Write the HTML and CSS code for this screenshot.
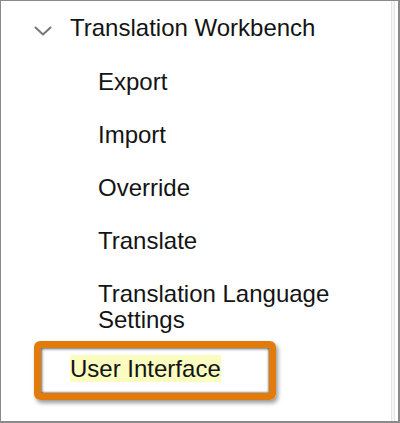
FILE: index.html
```html
<!DOCTYPE html>
<html lang="en">
<head>
<meta charset="utf-8">
<title>Translation Workbench</title>
<link rel="stylesheet" href="styles.css">
</head>
<body>
<div class="frame">
  <nav class="content">
    <div class="heading">
      <svg class="chevron" width="18" height="10" viewBox="0 0 18 10" aria-hidden="true">
        <path d="M1.5 1.5 L9 8.5 L16.5 1.5" fill="none" stroke="#777" stroke-width="2" stroke-linecap="round" stroke-linejoin="round"/>
      </svg>
      <span class="heading-text">Translation Workbench</span>
    </div>
    <ul class="items">
      <li class="item">Export</li>
      <li class="item">Import</li>
      <li class="item">Override</li>
      <li class="item">Translate</li>
      <li class="item">Translation Language<br>Settings</li>
      <li class="item marked"><span class="hl">User Interface</span></li>
    </ul>
  </nav>
  <div class="track"></div>
</div>
</body>
</html>
```

FILE: styles.css
```css
html, body {
  margin: 0;
  padding: 0;
  background: #ffffff;
}

.frame {
  width: 400px;
  height: 423px;
  box-sizing: border-box;
  border: 1px solid #8a8a8a;
  border-right: 2px solid #8a8a8a;
  border-bottom-width: 2px;
  display: flex;
  font-family: "Liberation Sans", Arial, sans-serif;
  font-size: 24px;
  line-height: 26px;
  color: #141414;
  overflow: hidden;
}

.content {
  width: 390px;
  padding-top: 14px;
}

.heading {
  display: flex;
  align-items: center;
  height: 26px;
}

.chevron {
  margin-left: 33px;
  margin-top: 6px;
  margin-right: 18px;
  flex: none;
}

.heading-text {
  white-space: nowrap;
}

.items {
  list-style: none;
  margin: 28px 0 0 0;
  padding: 0 0 0 97px;
  display: flex;
  flex-direction: column;
  gap: 27px;
}

.item {
  white-space: nowrap;
}

.item.marked {
  margin-left: -64px;
  margin-top: -19px;
  width: 242px;
  box-sizing: border-box;
  border: 7px solid #e07b0c;
  border-radius: 6px;
  padding: 8px 0 11px 29px;
  box-shadow: inset 1px 1px 3px rgba(0, 0, 0, 0.6), inset -1px -1px 2px rgba(0, 0, 0, 0.35), 2px 3px 4px rgba(0, 0, 0, 0.4);
}

.hl {
  background: #fafcc0;
}

.track {
  width: 2px;
  margin-left: 0;
  border-left: 1px solid #e4e4e4;
  border-right: 1px solid #e4e4e4;
  background: #f6f6f6;
}
```
